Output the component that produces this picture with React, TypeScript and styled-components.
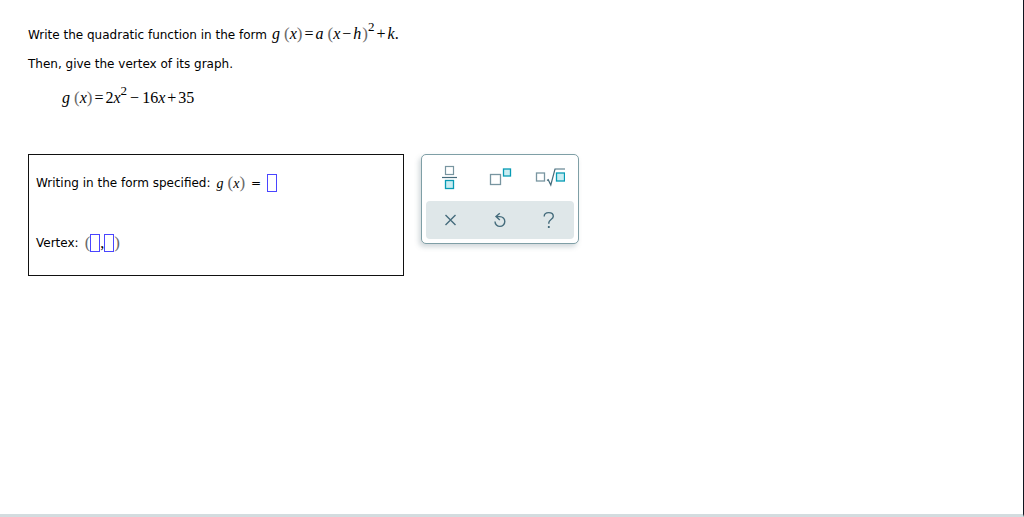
import React from "react";
import styled, { createGlobalStyle } from "styled-components";

const GlobalStyle = createGlobalStyle`
  *, *::before, *::after { box-sizing: border-box; }
  body { margin: 0; background: #fff; }
`;

const Page = styled.main`
  min-height: 100vh;
  padding: 19px 28px;
  border-right: 1px solid #10151f;
  border-bottom: 3px solid #d3dcdf;
  background: #fff;
  color: #000;
  font-family: Verdana, "DejaVu Sans", sans-serif;
  font-size: 12px;
`;

const Prompt = styled.p`
  display: flex;
  align-items: baseline;
  gap: 5px;
  height: 31px;
  margin: 0;
  line-height: 29px;
  white-space: nowrap;
`;

const Equation = styled.div`
  height: 34px;
  padding-left: 34px;
  line-height: 34px;
`;

const Math = styled.span<{ $small?: boolean }>`
  font-family: "Times New Roman", "Liberation Serif", serif;
  font-size: ${(p) => (p.$small ? 14 : 16)}px;
  white-space: nowrap;
`;

const Variable = styled.i`
  padding-right: 1px;
`;

const Operator = styled.span<{ $wide?: boolean }>`
  padding: 0 ${(p) => (p.$wide ? 3 : 2)}px;
`;

const Paren = styled.span<{ $lead?: boolean }>`
  margin-left: ${(p) => (p.$lead ? 3 : 0)}px;
  color: #6a6a6a;
  font-size: 17px;
  line-height: 20px;
`;

const Exponent = styled.sup`
  font-size: 13px;
  line-height: 0;
  vertical-align: 8px;
`;

const Workspace = styled.div`
  display: flex;
  align-items: flex-start;
  gap: 17px;
  margin-top: 39px;
`;

const AnswerCard = styled.form`
  flex: 0 1 376px;
  display: grid;
  gap: 29px;
  padding: 12px 7px 17px;
  border: 1px solid #111;
`;

const AnswerRow = styled.div`
  display: flex;
  align-items: center;
  gap: 6px;
  height: 31px;
  white-space: nowrap;
`;

const Coordinates = styled.span`
  display: flex;
  align-items: center;
  font-family: "Times New Roman", "Liberation Serif", serif;
  font-size: 16px;
`;

const Blank = styled.input`
  width: 10px;
  height: 18px;
  padding: 0;
  border: 1px solid #4a45ff;
  border-radius: 0;
  background: #fff;
  font: inherit;
  outline: none;
`;

const Keypad = styled.div`
  flex: 0 0 158px;
  padding: 0 4px 4px;
  border: 1px solid #7f9fa6;
  border-radius: 5px;
  background: #fff;
  box-shadow: -2px 3px 5px rgba(70, 100, 110, 0.25);
`;

const KeyRow = styled.div<{ $shaded?: boolean }>`
  display: flex;
  height: ${(p) => (p.$shaded ? 38 : 46)}px;
  border-radius: 4px;
  background: ${(p) => (p.$shaded ? "#dfe7e9" : "transparent")};
`;

const Key = styled.button`
  display: flex;
  align-items: center;
  justify-content: center;
  width: 49px;
  padding: 0;
  border: 0;
  background: none;
  cursor: pointer;
`;

const GREY = "#7895a0";
const SLATE = "#456c7c";
const TEAL = "#079bb4";
const AQUA = "#c9edf2";

function Icon({ children }: { children: React.ReactNode }) {
  return (
    <svg width="33" height="32" viewBox="0 0 33 32" fill="none" aria-hidden="true">
      {children}
    </svg>
  );
}

function GofX() {
  return (
    <>
      <Variable>g</Variable>
      <Paren $lead>(</Paren>
      <i>x</i>
      <Paren>)</Paren>
    </>
  );
}

export default function App() {
  return (
    <>
      <GlobalStyle />
      <Page>
        <Prompt>
          <span>Write the quadratic function in the form</span>
          <Math>
            <GofX />
            <Operator>=</Operator>
            <Variable>a</Variable>
            <Paren $lead>(</Paren>
            <i>x</i>
            <Operator>−</Operator>
            <Variable>h</Variable>
            <Paren>)</Paren>
            <Exponent>2</Exponent>
            <Operator>+</Operator>
            <i>k</i>.
          </Math>
        </Prompt>
        <Prompt>Then, give the vertex of its graph.</Prompt>
        <Equation>
          <Math>
            <GofX />
            <Operator>=</Operator>2<i>x</i>
            <Exponent>2</Exponent>
            <Operator $wide>−</Operator>16<i>x</i>
            <Operator>+</Operator>35
          </Math>
        </Equation>

        <Workspace>
          <AnswerCard onSubmit={(e) => e.preventDefault()}>
            <AnswerRow>
              <label htmlFor="form">Writing in the form specified:</label>
              <Math $small>
                <GofX />
              </Math>
              <span>=</span>
              <Blank id="form" />
            </AnswerRow>
            <AnswerRow>
              <label htmlFor="vertex-x">Vertex:</label>
              <Coordinates>
                <Paren>(</Paren>
                <Blank id="vertex-x" />
                <span>,</span>
                <Blank aria-label="Vertex y coordinate" />
                <Paren>)</Paren>
              </Coordinates>
            </AnswerRow>
          </AnswerCard>

          <Keypad>
            <KeyRow>
              <Key type="button" aria-label="Fraction">
                <Icon>
                  <rect x="11.5" y="4.5" width="8" height="8" stroke={GREY} strokeWidth="1.2" />
                  <path d="M8 15.5h15" stroke={SLATE} strokeWidth="1.2" />
                  <rect x="11.5" y="18.5" width="8" height="8" fill={AQUA} stroke={TEAL} strokeWidth="1.3" />
                </Icon>
              </Key>
              <Key type="button" aria-label="Exponent">
                <Icon>
                  <rect x="7.5" y="12.5" width="10" height="10" stroke={GREY} strokeWidth="1.3" />
                  <rect x="20.5" y="7" width="7" height="7" fill={AQUA} stroke={TEAL} strokeWidth="1.3" />
                </Icon>
              </Key>
              <Key type="button" aria-label="Root">
                <Icon>
                  <rect x="4.5" y="11" width="8" height="8" stroke={GREY} strokeWidth="1.3" />
                  <path d="M15 18.5l1.2-.8 2.6 5.3 4.2-16h11" stroke={SLATE} strokeWidth="1.2" />
                  <rect x="24.5" y="11" width="8" height="8" fill={AQUA} stroke={TEAL} strokeWidth="1.3" />
                </Icon>
              </Key>
            </KeyRow>
            <KeyRow $shaded>
              <Key type="button" aria-label="Clear">
                <Icon>
                  <path d="M11.5 11l10 10M21.5 11l-10 10" stroke={SLATE} strokeWidth="1.4" />
                </Icon>
              </Key>
              <Key type="button" aria-label="Undo">
                <Icon>
                  <path
                    d="M12 17.5a4.9 4.9 0 1 0 4.9-4.9h-3.6M16.8 9.2l-3.8 3.4 3.8 3.4"
                    stroke={SLATE}
                    strokeWidth="1.4"
                  />
                </Icon>
              </Key>
              <Key type="button" aria-label="Help">
                <Icon>
                  <path
                    d="M12.2 12.5c0-2.4 1.7-3.9 4.5-3.9s4.6 1.5 4.6 3.7c0 3.2-4.5 3.3-4.5 6.5v1"
                    stroke={SLATE}
                    strokeWidth="1.4"
                  />
                  <path d="M16.8 22v2" stroke={SLATE} strokeWidth="1.8" />
                </Icon>
              </Key>
            </KeyRow>
          </Keypad>
        </Workspace>
      </Page>
    </>
  );
}
